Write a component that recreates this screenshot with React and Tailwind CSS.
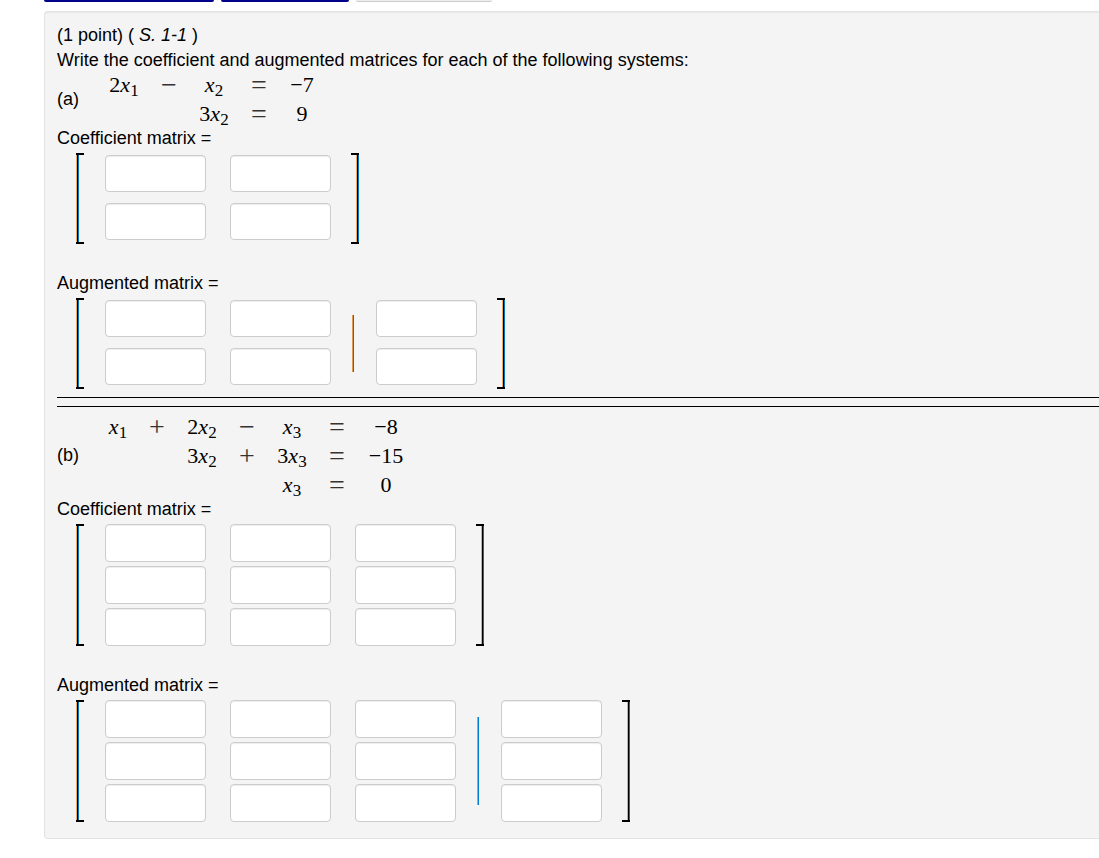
import React from "react";

// Coloured edges on each side of the bracket stroke
const Bracket = ({ side }) => (
  <div className={`flex w-2 border-y-2 border-black ${side === "right" ? "justify-end" : ""}`}>
    <span className="w-px bg-[#f0a860]" />
    <span className="w-px bg-black" />
    <span className="w-px bg-[#0070c0]" />
  </div>
);

const Divider = ({ rightColor }) => (
  <div className="my-[17px] flex w-0.5">
    <span className="w-px bg-[#e09a50]" />
    <span className={`w-px ${rightColor}`} />
  </div>
);

const Cells = ({ name, rows, cols, tall }) => (
  <div
    className={`grid content-start gap-x-6 ${cols === 3 ? "grid-cols-[repeat(3,101px)]" : cols === 2 ? "grid-cols-[repeat(2,101px)]" : "grid-cols-[101px]"} ${tall ? "gap-y-1" : "gap-y-[11px] py-0.5"}`}
  >
    {Array.from({ length: rows * cols }, (_, i) => (
      <input
        key={i}
        type="text"
        aria-label={`${name} row ${Math.floor(i / cols) + 1} column ${(i % cols) + 1}`}
        className={`w-full rounded border border-[#cccccc] bg-white px-1.5 shadow-[inset_0_1px_1px_rgba(0,0,0,0.075)] ${tall ? "h-[38px]" : "h-[37px]"}`}
      />
    ))}
  </div>
);

const Matrix = ({ name, rows, cols, augmented }) => {
  const tall = rows === 3;
  return (
    <div className={`mt-0.5 ml-[19px] flex ${tall ? "h-[122px]" : "h-[91px]"}`}>
      <Bracket side="left" />
      <div className="flex pr-5 pl-[21px]">
        <Cells name={name} rows={rows} cols={cols} tall={tall} />
        {augmented && (
          <div className="flex pl-[21px]">
            <Divider rightColor={tall ? "bg-[#0080d0]" : "bg-[#2070a0]"} />
            <div className="pl-[22px]">
              <Cells name={`${name} constants`} rows={rows} cols={1} tall={tall} />
            </div>
          </div>
        )}
      </div>
      <Bracket side="right" />
    </div>
  );
};

const operators = ["+", "−", "="];

const Term = ({ value }) => {
  if (operators.includes(value)) {
    return <span className="text-[28px] leading-none text-[#333333]">{value}</span>;
  }
  const [coefficient, index] = value.split("x");
  return (
    <>
      {coefficient}
      {index && (
        <>
          <i>x</i>
          <sub className="-bottom-1 text-[17px]">{index}</sub>
        </>
      )}
    </>
  );
};

const System = ({ label, widths, equations }) => (
  <div className="-mt-[3px] -mb-0.5 flex items-center">
    <span className="w-[35px]">{label}</span>
    <table className="table-fixed font-['Liberation_Serif',serif] text-[22px] leading-none">
      <tbody>
        {equations.map((equation, row) => (
          <tr key={row}>
            {equation.map((value, col) => (
              <td key={col} className={`p-0 whitespace-nowrap ${widths[col]}`}>
                <div className="flex h-[29px] items-center justify-center">
                  <span>
                    <Term value={value} />
                  </span>
                </div>
              </td>
            ))}
          </tr>
        ))}
      </tbody>
    </table>
  </div>
);

const App = () => {
  return (
    <div className="min-h-screen bg-white pl-11 font-['Liberation_Sans',Arial,sans-serif] text-[18px] leading-[25px] text-black">
      <div className="flex h-[11px] items-start gap-[7px]">
        <div className="h-0.5 w-[170px] rounded-b bg-[#00008b]" />
        <div className="h-0.5 w-32 rounded-b bg-[#00008b]" />
        <div className="h-0.5 w-[136px] rounded-b border-b border-[#cccccc] bg-[#eeeeee]" />
      </div>

      <main className="rounded-l border border-r-0 border-[#e3e3e3] bg-[#f4f4f4] pt-[11px] pb-4 pl-3 shadow-[inset_0_1px_1px_rgba(0,0,0,0.05)]">
        <p>
          (1 point) ( <i>S. 1-1</i> )
        </p>
        <p>Write the coefficient and augmented matrices for each of the following systems:</p>

        <System
          label="(a)"
          widths={["w-16", "w-[26px]", "w-16", "w-[26px]", "w-[60px]"]}
          equations={[
            ["2x1", "−", "x2", "=", "−7"],
            ["", "", "3x2", "=", "9"],
          ]}
        />
        <p>Coefficient matrix =</p>
        <Matrix name="System a coefficient matrix" rows={2} cols={2} />
        <p className="mt-[27px]">Augmented matrix =</p>
        <Matrix name="System a augmented matrix" rows={2} cols={2} augmented />

        <div className="my-2 h-[10px] border-y border-black" />

        <System
          label="(b)"
          widths={["w-[52px]", "w-[26px]", "w-16", "w-[26px]", "w-16", "w-[26px]", "w-[72px]"]}
          equations={[
            ["x1", "+", "2x2", "−", "x3", "=", "−8"],
            ["", "", "3x2", "+", "3x3", "=", "−15"],
            ["", "", "", "", "x3", "=", "0"],
          ]}
        />
        <p>Coefficient matrix =</p>
        <Matrix name="System b coefficient matrix" rows={3} cols={3} />
        <p className="mt-[27px]">Augmented matrix =</p>
        <Matrix name="System b augmented matrix" rows={3} cols={3} augmented />
      </main>
    </div>
  );
};

export default App;
